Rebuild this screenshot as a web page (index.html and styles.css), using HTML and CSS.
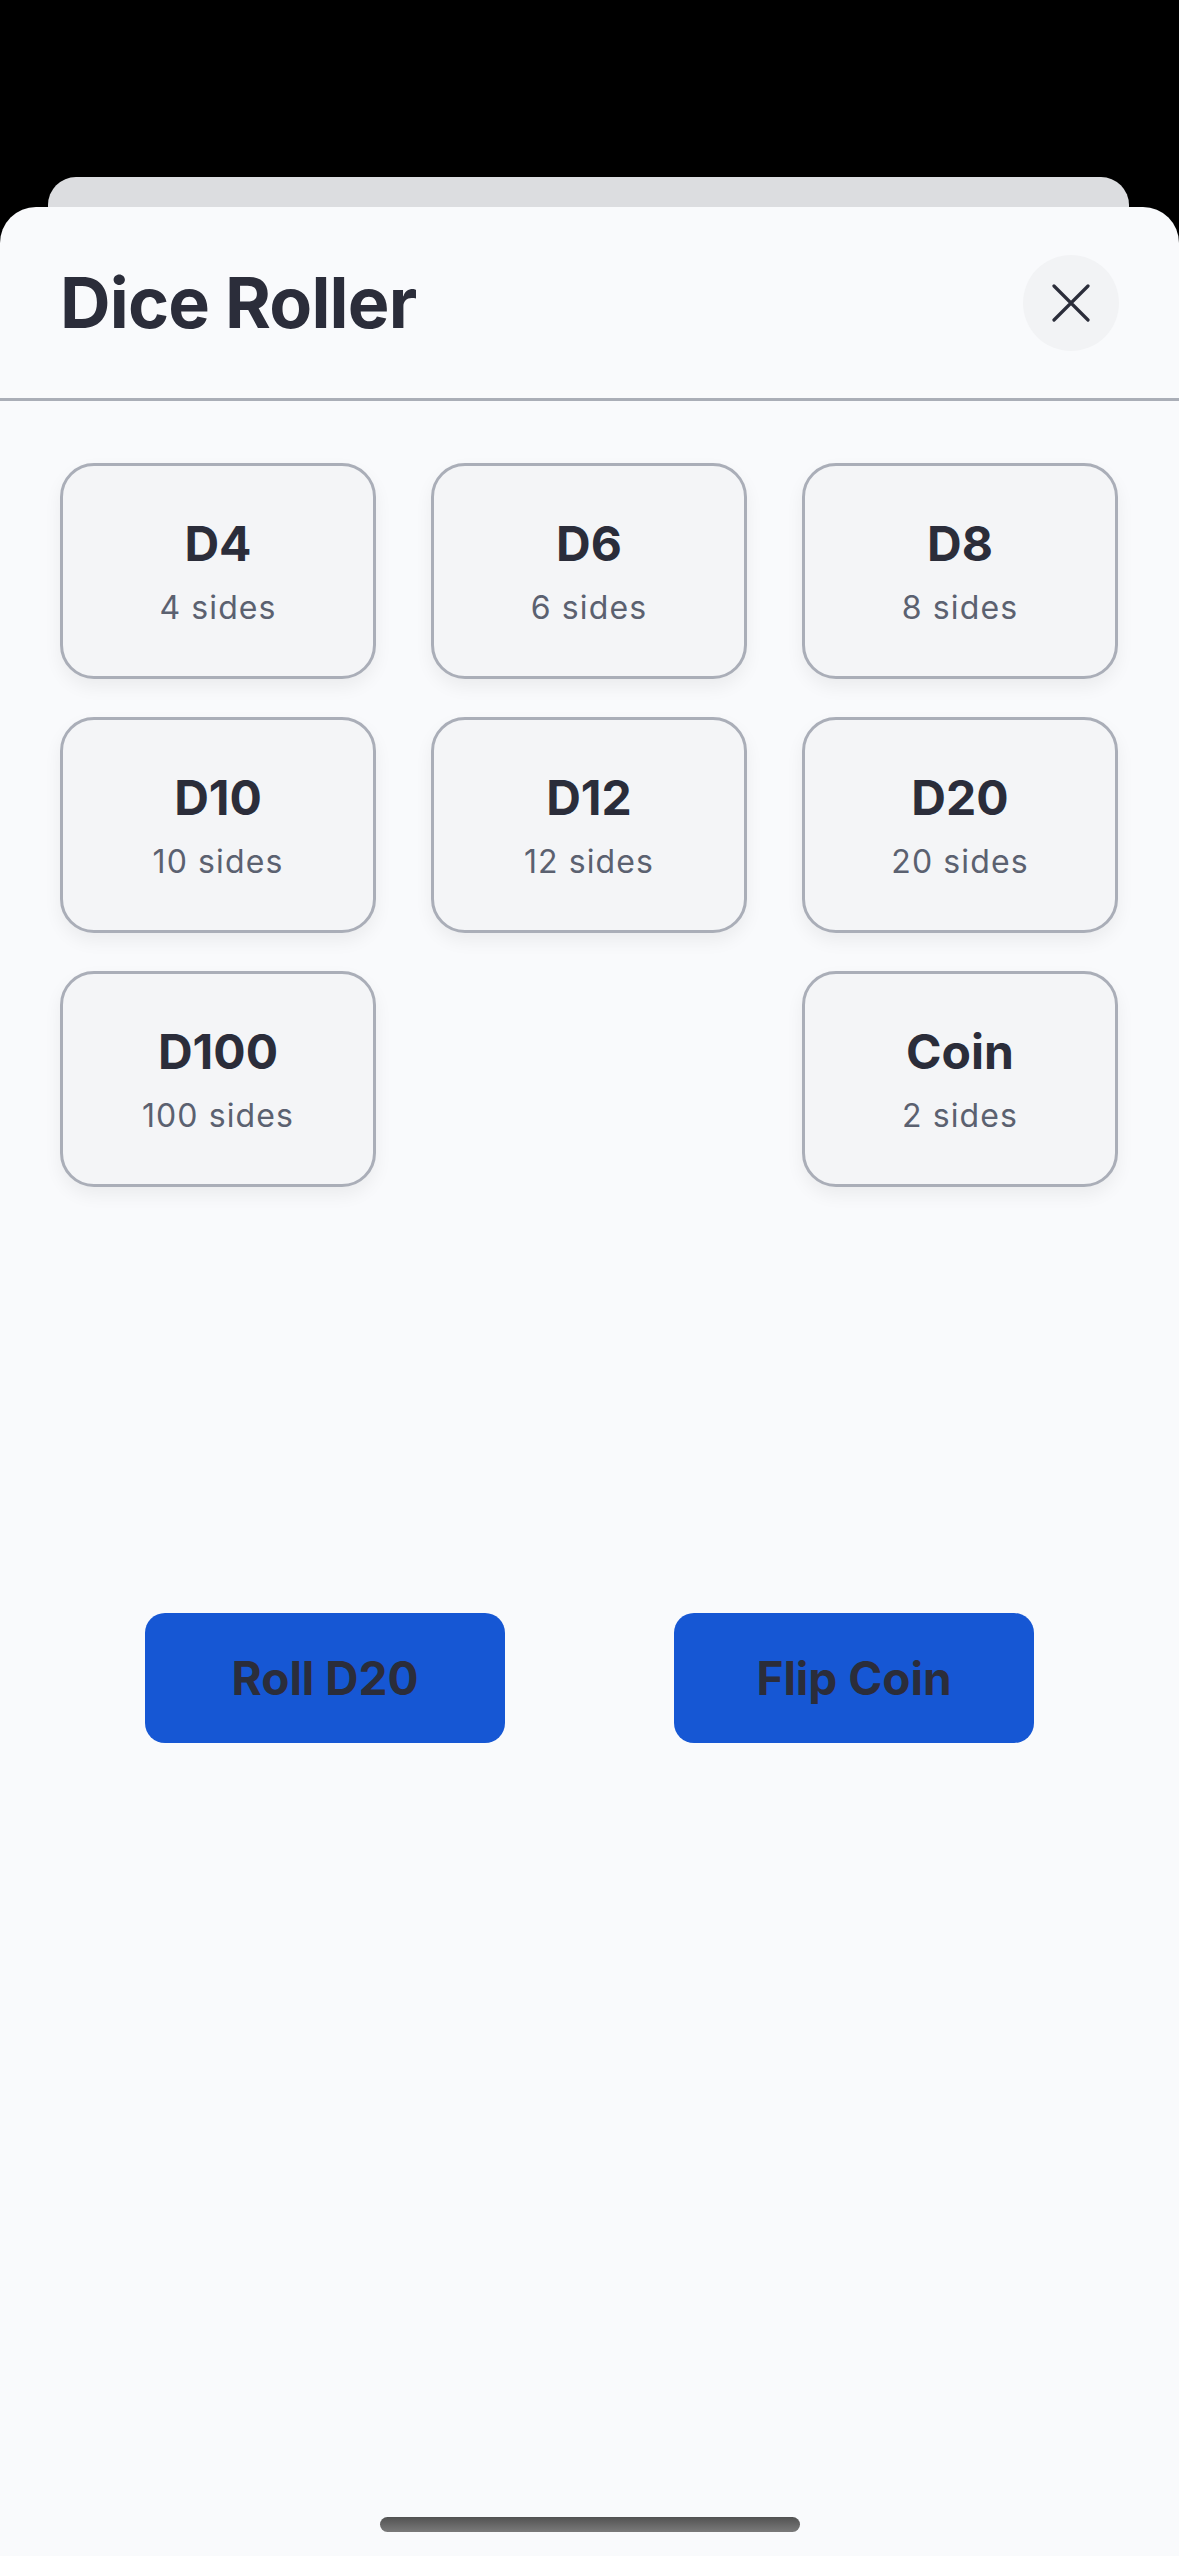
FILE: index.html
```html
<!DOCTYPE html>
<html lang="en">
<head>
  <meta charset="UTF-8">
  <title>Dice Roller</title>
  <meta name="viewport" content="width=device-width, initial-scale=1">
  <link rel="stylesheet" href="styles.css">
</head>
<body>
  <div class="backsheet"></div>
  <div class="sheet">
    <div class="header">
      <h1>Dice Roller</h1>
      <button class="close" aria-label="Close">
        <svg width="38" height="38" viewBox="0 0 38 38">
          <path d="M2 2 L36 36 M36 2 L2 36" stroke="#2b2d3a" stroke-width="3.2" stroke-linecap="round" fill="none"/>
        </svg>
      </button>
    </div>
    <div class="dice">
      <div class="die"><div class="die-name">D4</div><div class="die-sides">4 sides</div></div>
      <div class="die"><div class="die-name">D6</div><div class="die-sides">6 sides</div></div>
      <div class="die"><div class="die-name">D8</div><div class="die-sides">8 sides</div></div>
      <div class="die"><div class="die-name">D10</div><div class="die-sides">10 sides</div></div>
      <div class="die"><div class="die-name">D12</div><div class="die-sides">12 sides</div></div>
      <div class="die"><div class="die-name">D20</div><div class="die-sides">20 sides</div></div>
      <div class="die"><div class="die-name">D100</div><div class="die-sides">100 sides</div></div>
      <div class="die"><div class="die-name">Coin</div><div class="die-sides">2 sides</div></div>
    </div>
    <div class="actions">
      <button class="action">Roll D20</button>
      <button class="action">Flip Coin</button>
    </div>
    <div class="home-bar"></div>
  </div>
</body>
</html>
```

FILE: styles.css
```css
body { margin: 0; background: #000; font-family: Inter, "Noto Sans", sans-serif; color: #2b2d3a; }
.backsheet { height: 30px; margin: 177px 50px 0 48px; background: #dcdde0; border-radius: 28px 28px 0 0; }
.sheet { height: 2349px; background: #f9fafc; border-radius: 36px 36px 0 0; display: flex; flex-direction: column; }
.header { height: 191px; display: flex; align-items: center; justify-content: space-between; padding: 0 60px 0 60px; border-bottom: 3px solid #aaaeb7; }
h1 { margin: 0; font-size: 70px; font-weight: 700; letter-spacing: -0.8px; color: #2b2d3a; }
.close { width: 96px; height: 96px; border-radius: 50%; border: none; background: #f2f3f5; display: flex; align-items: center; justify-content: center; padding: 0; }
.dice { display: flex; flex-wrap: wrap; justify-content: space-between; row-gap: 38px; padding: 62px 61px 0 60px; }
.die { width: 316px; height: 216px; box-sizing: border-box; border: 3px solid #aaaeb8; border-radius: 34px; background: #f4f5f7; box-shadow: 0 8px 18px rgba(0, 0, 0, 0.06); display: flex; flex-direction: column; align-items: center; justify-content: center; gap: 16px; }
.die-name { font-size: 48px; font-weight: 700; line-height: 58px; color: #2b2d3a; }
.die-sides { font-size: 32px; line-height: 38px; letter-spacing: 1.1px; color: #5b6170; }
.actions { display: flex; justify-content: center; gap: 169px; margin-top: 426px; }
.action { width: 360px; height: 130px; border: none; border-radius: 20px; background: #1657d4; color: #2b2d3a; font-family: inherit; font-size: 46px; font-weight: 700; }
.home-bar { width: 420px; height: 15px; border-radius: 8px; background: linear-gradient(#525252, #7a7a7a); margin: auto auto 24px; }
```
